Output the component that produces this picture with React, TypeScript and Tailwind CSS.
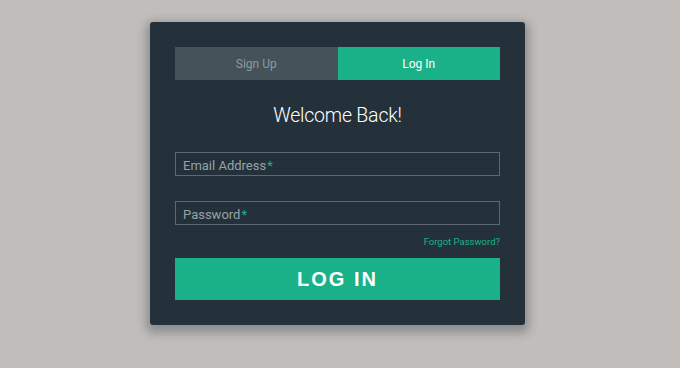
import * as React from "react";

export default function App() {
  const [tab, setTab] = React.useState<"signup" | "login">("login");

  return (
    <main className="min-h-screen w-full bg-[#c1bdba] pt-[22px] font-['Roboto',sans-serif]">
      <div className="ml-[150px] w-[375px] rounded-[3px] bg-[#24313b] px-[25px] pb-[25px] pt-[25px] shadow-[0_4px_10px_4px_rgba(19,35,47,0.3)]">
        {/* Tabs */}
        <ul className="flex">
          <li className="flex-1">
            <button
              type="button"
              onClick={() => setTab("signup")}
              className={`flex h-[33px] w-full items-center justify-center text-[12px] ${
                tab === "signup" ? "bg-[#1ab188] text-white" : "bg-[#435359] text-[#8c9c9e]"
              }`}
            >
              Sign Up
            </button>
          </li>
          <li className="flex-1">
            <button
              type="button"
              onClick={() => setTab("login")}
              className={`flex h-[33px] w-full items-center justify-center text-[12px] ${
                tab === "login" ? "bg-[#1ab188] text-white" : "bg-[#435359] text-[#8c9c9e]"
              }`}
            >
              Log In
            </button>
          </li>
        </ul>

        <h1 className="mt-[23px] text-center text-[19.5px] font-light leading-[26px] tracking-[-0.01em] text-white">
          Welcome Back!
        </h1>

        <form className="mt-[23px]" onSubmit={(e) => e.preventDefault()}>
          <div className="relative">
            <label className="pointer-events-none absolute left-[8px] top-[4px] text-[13px] text-[#95a3a5]">
              Email Address<span className="ml-[1px] text-[#1ab188]">*</span>
            </label>
            <input
              type="email"
              className="block h-[24px] w-full border border-[#5b6a70] bg-transparent px-[8px] text-[13px] text-white outline-none"
            />
          </div>

          <div className="relative mt-[25px]">
            <label className="pointer-events-none absolute left-[8px] top-[4px] text-[13px] text-[#95a3a5]">
              Password<span className="ml-[1px] text-[#1ab188]">*</span>
            </label>
            <input
              type="password"
              className="block h-[24px] w-full border border-[#5b6a70] bg-transparent px-[8px] text-[13px] text-white outline-none"
            />
          </div>

          <p className="mt-[11px] text-right text-[9.5px] leading-[12px]">
            <a href="#" className="text-[#1ab188]">
              Forgot Password?
            </a>
          </p>

          <button
            type="submit"
            className="mt-[10px] block h-[42px] w-full bg-[#1ab188] font-['Liberation_Sans',sans-serif] text-[20px] font-bold uppercase tracking-[0.1em] text-white"
          >
            Log In
          </button>
        </form>
      </div>
    </main>
  );
}
